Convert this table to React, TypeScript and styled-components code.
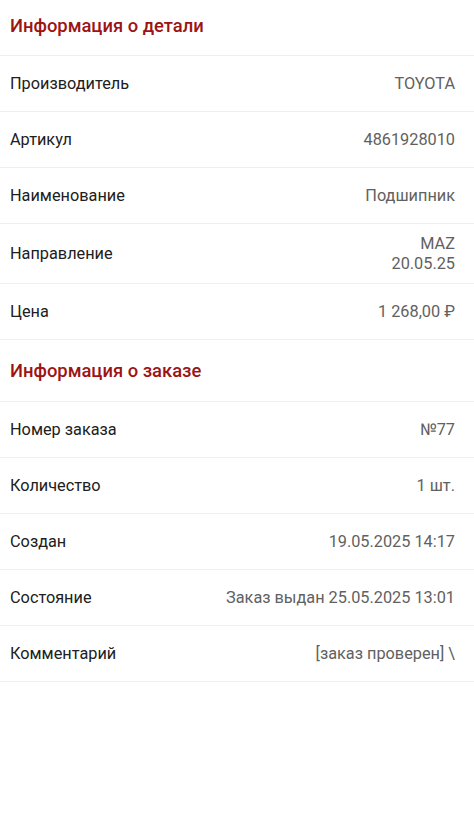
import React from "react";
import styled, { createGlobalStyle } from "styled-components";

const Global = createGlobalStyle`
  html, body { margin: 0; padding: 0; background: #ffffff; }
  body { font-family: Roboto, "Noto Sans", sans-serif; -webkit-font-smoothing: antialiased; }
`;

const Page = styled.div`
  width: 474px;
  min-height: 827px;
  background: #ffffff;
  display: flex;
  flex-direction: column;
`;

const SectionHeader = styled.div<{ $first?: boolean }>`
  padding: ${(p) => (p.$first ? "14px 10px 17px" : "19px 10px 18px")};
  font-size: 18.4px;
  line-height: 24px;
  font-weight: 500;
  color: #9c1414;
  border-bottom: 1px solid #efefef;
`;

const Row = styled.div`
  display: flex;
  align-items: center;
  justify-content: space-between;
  min-height: 56px;
  box-sizing: border-box;
  padding: 10px 19px 9px 10px;
  border-bottom: 1px solid #efefef;
  font-size: 16.3px;
  line-height: 20px;
`;

const Label = styled.div`
  color: #202020;
`;

const Value = styled.div`
  color: #616161;
  text-align: right;
`;

type Item = { label: string; value: React.ReactNode };

const detail: Item[] = [
  { label: "Производитель", value: "TOYOTA" },
  { label: "Артикул", value: "4861928010" },
  { label: "Наименование", value: "Подшипник" },
  { label: "Направление", value: <>MAZ<br />20.05.25</> },
  { label: "Цена", value: "1 268,00 ₽" },
];

const order: Item[] = [
  { label: "Номер заказа", value: "№77" },
  { label: "Количество", value: "1 шт." },
  { label: "Создан", value: "19.05.2025 14:17" },
  { label: "Состояние", value: "Заказ выдан 25.05.2025 13:01" },
  { label: "Комментарий", value: "[заказ проверен] \\" },
];

export default function App() {
  return (
    <>
      <Global />
      <Page>
        <SectionHeader $first>Информация о детали</SectionHeader>
        {detail.map((it) => (
          <Row key={it.label}>
            <Label>{it.label}</Label>
            <Value>{it.value}</Value>
          </Row>
        ))}
        <SectionHeader>Информация о заказе</SectionHeader>
        {order.map((it) => (
          <Row key={it.label}>
            <Label>{it.label}</Label>
            <Value>{it.value}</Value>
          </Row>
        ))}
      </Page>
    </>
  );
}
